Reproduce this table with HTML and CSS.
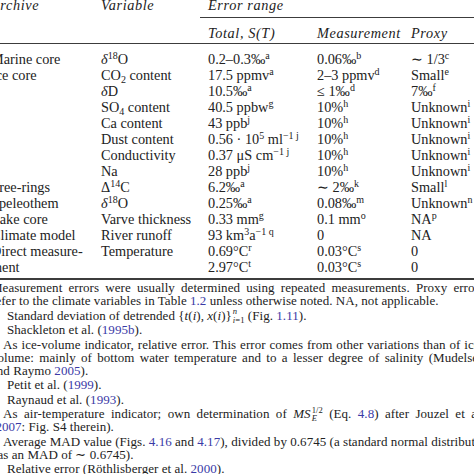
FILE: index.html
```html
<!DOCTYPE html>
<html lang="en">
<head>
<meta charset="utf-8">
<title>Error ranges of climate archives</title>
<link rel="stylesheet" href="styles.css">
</head>
<body>
<div class="page">
  <table class="data">
    <colgroup>
      <col class="c-arch"><col class="c-var"><col class="c-tot"><col class="c-meas"><col class="c-prox">
    </colgroup>
    <thead>
      <tr class="hd hd-top">
        <th>Archive</th><th>Variable</th><th colspan="3" class="span">Error range</th>
      </tr>
      <tr class="hd hd-sub">
        <th></th><th></th><th>Total, S(T)</th><th>Measurement</th><th>Proxy</th>
      </tr>
    </thead>
    <tbody>
      <tr><td>Marine core</td><td><i>δ</i><sup>18</sup>O</td><td>0.2–0.3‰<sup>a</sup></td><td>0.06‰<sup>b</sup></td><td>∼ 1/3<sup>c</sup></td></tr>
      <tr><td>Ice core</td><td>CO<sub>2</sub> content</td><td>17.5 ppmv<sup>a</sup></td><td>2–3 ppmv<sup>d</sup></td><td>Small<sup>e</sup></td></tr>
      <tr><td></td><td><i>δ</i>D</td><td>10.5‰<sup>a</sup></td><td>≤ 1‰<sup>d</sup></td><td>7‰<sup>f</sup></td></tr>
      <tr><td></td><td>SO<sub>4</sub> content</td><td>40.5 ppbw<sup>g</sup></td><td>10%<sup>h</sup></td><td>Unknown<sup>i</sup></td></tr>
      <tr><td></td><td>Ca content</td><td>43 ppb<sup>j</sup></td><td>10%<sup>h</sup></td><td>Unknown<sup>i</sup></td></tr>
      <tr><td></td><td>Dust content</td><td>0.56 · 10<sup>5</sup> ml<sup>−1 j</sup></td><td>10%<sup>h</sup></td><td>Unknown<sup>i</sup></td></tr>
      <tr><td></td><td>Conductivity</td><td>0.37 μS cm<sup>−1 j</sup></td><td>10%<sup>h</sup></td><td>Unknown<sup>i</sup></td></tr>
      <tr><td></td><td>Na</td><td>28 ppb<sup>j</sup></td><td>10%<sup>h</sup></td><td>Unknown<sup>i</sup></td></tr>
      <tr><td>Tree-rings</td><td>Δ<sup>14</sup>C</td><td>6.2‰<sup>a</sup></td><td>∼ 2‰<sup>k</sup></td><td>Small<sup>l</sup></td></tr>
      <tr><td>Speleothem</td><td><i>δ</i><sup>18</sup>O</td><td>0.25‰<sup>a</sup></td><td>0.08‰<sup>m</sup></td><td>Unknown<sup>n</sup></td></tr>
      <tr><td>Lake core</td><td>Varve thickness</td><td>0.33 mm<sup>g</sup></td><td>0.1 mm<sup>o</sup></td><td>NA<sup>p</sup></td></tr>
      <tr><td>Climate model</td><td>River runoff</td><td>93 km<sup>3</sup>a<sup>−1 q</sup></td><td>0</td><td>NA</td></tr>
      <tr><td>Direct measure-</td><td>Temperature</td><td>0.69°C<sup>r</sup></td><td>0.03°C<sup>s</sup></td><td>0</td></tr>
      <tr><td>ment</td><td></td><td>2.97°C<sup>t</sup></td><td>0.03°C<sup>s</sup></td><td>0</td></tr>
    </tbody>
  </table>

  <div class="notes">
    <p class="note">
      <span class="ln just">Measurement errors were usually determined using repeated measurements. Proxy errors</span>
      <span class="ln">refer to the climate variables in Table <a class="ref">1.2</a> unless otherwise noted. NA, not applicable.</span>
    </p>
    <p class="note"><span class="ln"><span class="mark"><sup>a</sup></span>Standard deviation of detrended {<i>t</i>(<i>i</i>), <i>x</i>(<i>i</i>)}<span class="ss"><span><i>n</i></span><span><i>i</i>=1</span></span> (Fig. <a class="ref">1.11</a>).</span></p>
    <p class="note"><span class="ln"><span class="mark"><sup>b</sup></span>Shackleton et al. (<a class="ref">1995b</a>).</span></p>
    <p class="note">
      <span class="ln just"><span class="mark mark-a"><sup>c</sup></span>As ice-volume indicator, relative error. This error comes from other variations than of ice-</span>
      <span class="ln just">volume: mainly of bottom water temperature and to a lesser degree of salinity (Mudelsee</span>
      <span class="ln">and Raymo <a class="ref">2005</a>).</span>
    </p>
    <p class="note"><span class="ln"><span class="mark"><sup>d</sup></span>Petit et al. (<a class="ref">1999</a>).</span></p>
    <p class="note"><span class="ln"><span class="mark"><sup>e</sup></span>Raynaud et al. (<a class="ref">1993</a>).</span></p>
    <p class="note">
      <span class="ln just"><span class="mark mark-a"><sup>f</sup></span>As air-temperature indicator; own determination of <i>MS</i><span class="ss"><span>1/2</span><span><i>E</i></span></span> (Eq. <a class="ref">4.8</a>) after Jouzel et al.</span>
      <span class="ln">(<a class="ref">2007</a>: Fig. S4 therein).</span>
    </p>
    <p class="note">
      <span class="ln just"><span class="mark mark-a"><sup>g</sup></span>Average MAD value (Figs. <a class="ref">4.16</a> and <a class="ref">4.17</a>), divided by 0.6745 (a standard normal distribution</span>
      <span class="ln">has an MAD of ∼ 0.6745).</span>
    </p>
    <p class="note"><span class="ln"><span class="mark"><sup>h</sup></span>Relative error (Röthlisberger et al. <a class="ref">2000</a>).</span></p>
  </div>
</div>
</body>
</html>
```

FILE: styles.css
```css
* { box-sizing: border-box; }

html, body {
  margin: 0;
  padding: 0;
  background: #ffffff;
}

body {
  width: 474px;
  height: 474px;
  overflow: hidden;
  color: #222222;
  font-family: "Liberation Serif", "Times New Roman", serif;
}

.page {
  width: 510px;
  margin: -3px 0 0 -17px;
}

/* ---------- table ---------- */
.data {
  width: 510px;
  table-layout: fixed;
  border-collapse: separate;
  border-spacing: 0;
  font-size: 14.3px;
  line-height: 16px;
}

.c-arch { width: 110px; }
.c-var  { width: 107px; }
.c-tot  { width: 109px; }
.c-meas { width: 94px; }
.c-prox { width: 90px; }

.data th,
.data td {
  padding: 0 0 0 8px;
  text-align: left;
  font-weight: normal;
  white-space: nowrap;
  vertical-align: top;
}

.hd th {
  font-style: italic;
  letter-spacing: 0.6px;
}

.hd-top th { padding-bottom: 4px; }
.hd-top .span { border-bottom: 1px solid #3c3c3c; }

.hd-sub th {
  padding-top: 7px;
  padding-bottom: 2px;
  border-bottom: 1px solid #3c3c3c;
}

.data tbody tr:first-child td { padding-top: 7px; }
.data tbody tr:last-child td {
  padding-bottom: 3px;
  border-bottom: 2px solid #3c3c3c;
}

/* ---------- scripts ---------- */
sup, sub {
  font-size: 0.7em;
  line-height: 0;
}
sup { vertical-align: 0.5em; }
sub { vertical-align: -0.3em; }

.ss {
  display: inline-flex;
  flex-direction: column;
  font-size: 0.66em;
  line-height: 1;
  vertical-align: 0.6em;
  margin: -6px 0 -6px 1px;
}

/* ---------- notes ---------- */
.notes {
  width: 493px;
  margin: 1px 0 0 8px;
  font-size: 13px;
  line-height: 13px;
  letter-spacing: 0.05px;
}

.note { margin: 0; }
.note + .note { margin-top: 1.5px; }

.ln {
  display: block;
  white-space: nowrap;
}

.just {
  text-align: justify;
  text-align-last: justify;
}

.mark {
  display: inline-block;
  width: 16px;
}
.mark-a { width: 12px; }

.ref {
  color: #3a3aa6;
  text-decoration: none;
}
```
